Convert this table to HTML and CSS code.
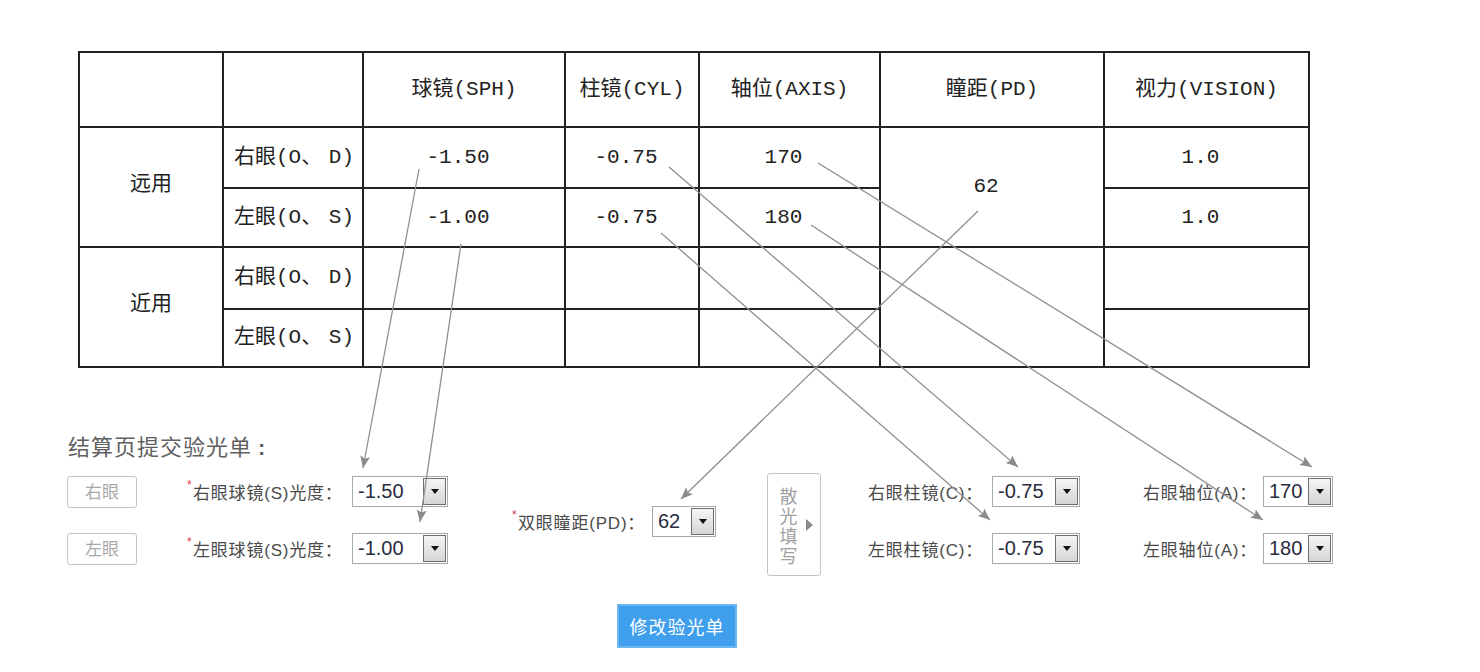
FILE: index.html
```html
<!DOCTYPE html>
<html lang="zh-CN">
<head>
<meta charset="utf-8">
<title>验光单</title>
<link rel="stylesheet" href="styles.css">
</head>
<body>
<div class="page">
  <table class="rx">
    <colgroup>
      <col class="c1"><col class="c2"><col class="c3"><col class="c4"><col class="c5"><col class="c6"><col class="c7">
    </colgroup>
    <tr class="r0">
      <th></th><th></th><th>球镜(SPH)</th><th>柱镜(CYL)</th><th>轴位(AXIS)</th><th>瞳距(PD)</th><th>视力(VISION)</th>
    </tr>
    <tr class="r1">
      <td rowspan="2" class="grp">远用</td><td class="eye-name">右眼(O、 D)</td><td class="num">-1.50</td><td class="num">-0.75</td><td class="num">170</td><td rowspan="2" class="num">62</td><td class="num">1.0</td>
    </tr>
    <tr class="r2">
      <td class="eye-name">左眼(O、 S)</td><td class="num">-1.00</td><td class="num">-0.75</td><td class="num">180</td><td class="num">1.0</td>
    </tr>
    <tr class="r3">
      <td rowspan="2" class="grp">近用</td><td class="eye-name">右眼(O、 D)</td><td></td><td></td><td></td><td rowspan="2"></td><td></td>
    </tr>
    <tr class="r4">
      <td class="eye-name">左眼(O、 S)</td><td></td><td></td><td></td><td></td>
    </tr>
  </table>

  <div class="checkout">
    <div class="title">结算页提交验光单<span class="colon">:</span></div>
    <div class="form">
      <div class="eyes">
        <button class="eye">右眼</button>
        <button class="eye">左眼</button>
      </div>
      <div class="group sph">
        <div class="field"><span class="req">*</span><span class="lbl">右眼球镜(S)光度：</span><div class="sel"><span class="val">-1.50</span><span class="arr"><i></i></span></div></div>
        <div class="field"><span class="req">*</span><span class="lbl">左眼球镜(S)光度：</span><div class="sel"><span class="val">-1.00</span><span class="arr"><i></i></span></div></div>
      </div>
      <div class="group pd">
        <div class="field"><span class="req">*</span><span class="lbl">双眼瞳距(PD)：</span><div class="sel"><span class="val">62</span><span class="arr"><i></i></span></div></div>
      </div>
      <button class="astig"><span class="vt">散光填写</span><span class="tri"></span></button>
      <div class="group cyl">
        <div class="field"><span class="lbl">右眼柱镜(C)：</span><div class="sel"><span class="val">-0.75</span><span class="arr"><i></i></span></div></div>
        <div class="field"><span class="lbl">左眼柱镜(C)：</span><div class="sel"><span class="val">-0.75</span><span class="arr"><i></i></span></div></div>
      </div>
      <div class="group axis">
        <div class="field"><span class="lbl">右眼轴位(A)：</span><div class="sel"><span class="val">170</span><span class="arr"><i></i></span></div></div>
        <div class="field"><span class="lbl">左眼轴位(A)：</span><div class="sel"><span class="val">180</span><span class="arr"><i></i></span></div></div>
      </div>
    </div>
    <button class="submit">修改验光单</button>
  </div>

  <svg class="arrows" width="1480" height="672" viewBox="0 0 1480 672" xmlns="http://www.w3.org/2000/svg">
    <defs>
      <marker id="ah" markerUnits="userSpaceOnUse" markerWidth="12" markerHeight="10" refX="12" refY="5" orient="auto">
        <path d="M0,0 L12,5 L0,10 L2.5,5 z" fill="#8a8a8a"/>
      </marker>
    </defs>
    <g stroke="#8f8f8f" stroke-width="1.3" fill="none" marker-end="url(#ah)">
      <line x1="419" y1="169" x2="363" y2="468"/>
      <line x1="461" y1="244" x2="420" y2="522"/>
      <line x1="669" y1="167" x2="1018" y2="467"/>
      <line x1="661" y1="233" x2="990" y2="520"/>
      <line x1="818" y1="163" x2="1312" y2="467"/>
      <line x1="811" y1="225" x2="1263" y2="520"/>
      <line x1="978" y1="211" x2="681" y2="499"/>
    </g>
  </svg>
</div>
</body>
</html>
```

FILE: styles.css
```css
* { box-sizing: border-box; }

html, body {
  margin: 0;
  padding: 0;
  background: #fff;
}

.page {
  position: relative;
  width: 1480px;
  height: 672px;
  overflow: hidden;
}

/* ---------- prescription table ---------- */
.rx {
  border-collapse: collapse;
  table-layout: fixed;
  width: 1230px;
  margin: 51px 0 0 78px;
  font: 21px/1.2 "Liberation Mono", "Noto Sans CJK SC", monospace;
  color: #222;
}
.rx .c1 { width: 144px; }
.rx .c2 { width: 140px; }
.rx .c3 { width: 202px; }
.rx .c4 { width: 134px; }
.rx .c5 { width: 181px; }
.rx .c6 { width: 224px; }
.rx .c7 { width: 205px; }

.rx th, .rx td {
  border: 2px solid #222;
  padding: 0;
  text-align: center;
  font-weight: normal;
  vertical-align: middle;
  white-space: nowrap;
}
.rx .r0 { height: 75px; }
.rx .r1 { height: 61px; }
.rx .r2 { height: 59px; }
.rx .r3 { height: 62px; }
.rx .r4 { height: 58px; }

.rx .eye-name {
  text-align: left;
  padding-left: 10px;
  word-spacing: -6px;
}
.rx .num { padding-right: 12px; }
.rx .grp { padding-bottom: 4px; }

/* ---------- checkout form ---------- */
.checkout {
  font-family: "Liberation Sans", "Noto Sans CJK SC", sans-serif;
}

.title {
  margin-top: 65px;
  padding-left: 68px;
  font-size: 22px;
  line-height: 30px;
  letter-spacing: 1px;
  color: #606060;
}
.title .colon {
  margin-left: 6px;
  font-weight: bold;
}

.form {
  display: flex;
  align-items: flex-start;
  margin-top: 9px;
  padding-left: 67px;
}

.eyes {
  display: flex;
  flex-direction: column;
  gap: 25px;
  margin-top: 4px;
}
.eye {
  width: 70px;
  height: 32px;
  padding: 0;
  border: 1px solid #c4c4c4;
  border-radius: 3px;
  background: #fff;
  color: #a8a8a8;
  font: 17px/1 "Liberation Sans", "Noto Sans CJK SC", sans-serif;
}

.group {
  display: flex;
  flex-direction: column;
  gap: 26px;
  margin-top: 4px;
}
.field {
  display: flex;
  align-items: center;
  height: 31px;
}
.req {
  width: 6px;
  align-self: flex-start;
  margin-top: 3px;
  color: #e0404a;
  font-size: 12px;
  line-height: 12px;
}
.lbl {
  font-size: 17px;
  letter-spacing: 0.8px;
  color: #4a4a4a;
  white-space: nowrap;
}

.sel {
  display: flex;
  height: 31px;
  border: 1px solid #a9a9a9;
  background: #fff;
}
.sel .val {
  flex: 1;
  padding-left: 5px;
  font: 20px/29px "Liberation Sans", Arial, sans-serif;
  color: #2a2a40;
}
.sel .arr {
  display: flex;
  align-items: center;
  justify-content: center;
  width: 23px;
  margin: 1px 1px 1px 0;
  border: 1px solid #6f6f6f;
  background: linear-gradient(#f5f5f5, #d5d5d5);
}
.sel .arr i {
  width: 0;
  height: 0;
  border-top: 5px solid #111;
  border-left: 4px solid transparent;
  border-right: 4px solid transparent;
}

.sph { margin-left: 50px; }
.sph .lbl { width: 159px; }
.sph .sel { width: 96px; }

.pd { margin-left: 64px; margin-top: 34px; }
.pd .lbl { width: 134px; }
.pd .sel { width: 64px; }

.astig {
  display: flex;
  align-items: center;
  justify-content: center;
  gap: 8px;
  width: 54px;
  height: 103px;
  margin: 1px 0 0 51px;
  padding: 0 0 0 4px;
  border: 1px solid #c4c4c4;
  border-radius: 3px;
  background: #fff;
}
.astig .vt {
  width: 18px;
  font: 18px/20px "Noto Sans CJK SC", sans-serif;
  color: #a0a0a0;
  word-break: break-all;
}
.astig .tri {
  width: 0;
  height: 0;
  border-left: 7px solid #8a8a8a;
  border-top: 6px solid transparent;
  border-bottom: 6px solid transparent;
}

.cyl { margin-left: 47px; }
.cyl .lbl { width: 124px; }
.cyl .sel { width: 88px; }

.axis { margin-left: 63px; }
.axis .lbl { width: 120px; }
.axis .sel { width: 70px; }

.submit {
  display: block;
  width: 120px;
  height: 44px;
  margin: 28px 0 0 617px;
  padding: 0;
  border: 2px solid #6cb7f2;
  background: #3f9fec;
  color: #fff;
  font: 18px/1 "Noto Sans CJK SC", sans-serif;
  letter-spacing: 1px;
}

/* ---------- overlay arrows ---------- */
.arrows {
  position: absolute;
  left: 0;
  top: 0;
  pointer-events: none;
}
```
